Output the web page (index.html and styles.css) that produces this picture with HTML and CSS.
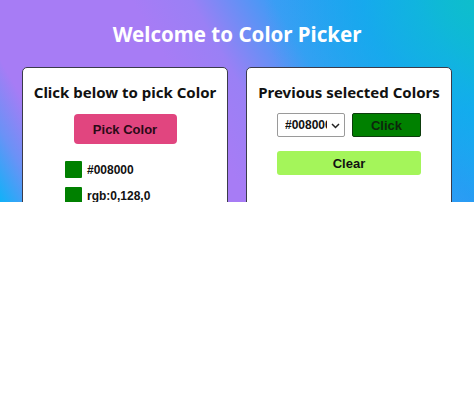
FILE: index.html
```html
<!DOCTYPE html>
<html lang="en">
<head>
<meta charset="utf-8">
<title>Color Picker</title>
<link rel="stylesheet" href="styles.css">
</head>
<body>
<main class="popup">
  <h1 class="title">Welcome to Color Picker</h1>
  <div class="cards">
    <section class="card">
      <h2 class="card-title">Click below to pick Color</h2>
      <button class="btn btn-pick" type="button">Pick Color</button>
      <ul class="values">
        <li class="value"><span class="swatch"></span>#008000</li>
        <li class="value"><span class="swatch"></span>rgb:0,128,0</li>
      </ul>
    </section>
    <section class="card">
      <h2 class="card-title">Previous selected Colors</h2>
      <div class="history-row">
        <span class="select-wrap">
          <select class="history">
            <option>#008000</option>
          </select>
          <svg class="chevron" width="9" height="6" viewBox="0 0 9 6" aria-hidden="true"><path d="M1 1l3.5 3.5L8 1" fill="none" stroke="#222" stroke-width="1.5"/></svg>
        </span>
        <button class="btn btn-click" type="button">Click</button>
      </div>
      <button class="btn btn-clear" type="button">Clear</button>
    </section>
  </div>
</main>
</body>
</html>
```

FILE: styles.css
```css
html, body {
  margin: 0;
  background: #fff;
}

.popup {
  width: 474px;
  height: 202px;
  overflow: hidden;
  box-sizing: border-box;
  background:
    radial-gradient(circle at 100% 0%, rgba(14, 190, 204, 0.95) 0, rgba(10, 178, 232, 0.6) 110px, rgba(10, 178, 232, 0) 210px),
    linear-gradient(60deg, #10b2f8 0%, #6a92f6 7%, #a77cf5 14%, #a77cf5 42%, #9a80f5 52%, #3d9cf5 66%, #2a9bf5 80%, #1ea5f5 90%, #0fbccc 100%);
  font-family: "Noto Sans", "Open Sans", sans-serif;
}

.title {
  margin: 0;
  padding: 19px 0 0;
  height: 48px;
  text-align: center;
  color: #fff;
  font-size: 20.5px;
  font-weight: 700;
  line-height: 30px;
}

.cards {
  display: flex;
  gap: 18px;
  padding: 0 22px;
}

.card {
  flex: 1;
  height: 200px;
  background: #fff;
  border: 1px solid #3b3b4a;
  border-radius: 5px;
  box-sizing: border-box;
  display: flex;
  flex-direction: column;
  align-items: center;
  padding-top: 13px;
}

.card-title {
  margin: 0;
  font-size: 15px;
  font-weight: 700;
  line-height: 22px;
  color: #111;
  white-space: nowrap;
}

.btn {
  font-family: "Liberation Sans", Arial, sans-serif;
  font-weight: 700;
  font-size: 13px;
  border: none;
  cursor: pointer;
  padding: 0;
}

.btn-pick {
  margin-top: 11px;
  width: 103px;
  height: 30px;
  background: #e1457f;
  color: #2a0a16;
  border-radius: 4px;
}

.values {
  list-style: none;
  margin: 17px 0 0;
  padding: 0;
  align-self: flex-start;
  margin-left: 42px;
  display: flex;
  flex-direction: column;
  gap: 9px;
}

.value {
  display: flex;
  align-items: center;
  gap: 5px;
  font-family: "Liberation Sans", Arial, sans-serif;
  font-weight: 700;
  font-size: 12px;
  line-height: 14px;
  color: #111;
}

.swatch {
  width: 17px;
  height: 17px;
  background: #008000;
  border-radius: 1px;
}

.history-row {
  margin-top: 10px;
  display: flex;
  gap: 7px;
  align-items: center;
}

.select-wrap {
  position: relative;
  display: block;
}

.history {
  appearance: none;
  -webkit-appearance: none;
  display: block;
  width: 68px;
  height: 24px;
  box-sizing: border-box;
  padding: 0 17px 0 7px;
  border: 1px solid #9a9a9a;
  border-radius: 2px;
  background: #fff;
  color: #111;
  font-family: "Liberation Sans", Arial, sans-serif;
  font-weight: 700;
  font-size: 12px;
}

.chevron {
  position: absolute;
  right: 5px;
  top: 10px;
  pointer-events: none;
}

.btn-click {
  width: 69px;
  height: 24px;
  box-sizing: border-box;
  background: #008000;
  border: 1px solid #0d3d0d;
  border-radius: 2px;
  color: #0c260c;
}

.btn-clear {
  margin-top: 14px;
  width: 144px;
  height: 24px;
  background: #a4f55a;
  color: #111;
  border-radius: 3px;
}
```
